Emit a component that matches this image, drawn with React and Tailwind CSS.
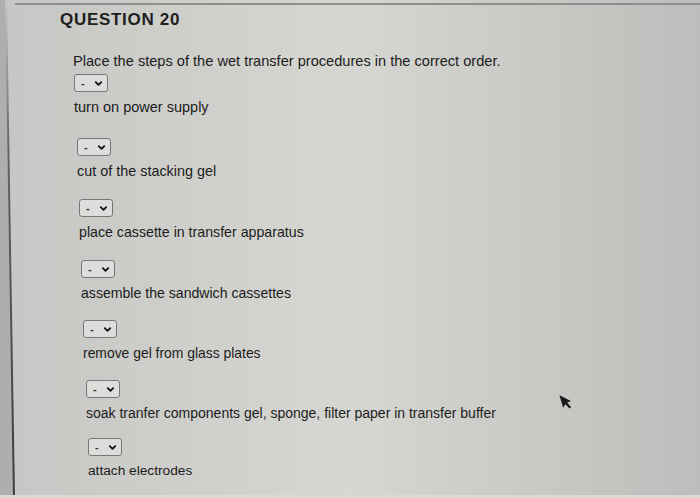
import React from "react";
import { ChevronDown } from "lucide-react";

// each step sits a touch further right, gaps tighten and type shrinks toward the bottom
const steps = [
  { label: "turn on power supply", wrap: "mt-[5px] ml-[14px]", size: "text-[14.5px]" },
  { label: "cut of the stacking gel", wrap: "mt-[23px] ml-[17px]", size: "text-[14.4px]" },
  { label: "place cassette in transfer apparatus", wrap: "mt-[20px] ml-[19px]", size: "text-[14.2px]" },
  { label: "assemble the sandwich cassettes", wrap: "mt-[20px] ml-[21px]", size: "text-[14.1px]" },
  { label: "remove gel from glass plates", wrap: "mt-[19px] ml-[23px]", size: "text-[13.9px]" },
  { label: "soak tranfer components gel, sponge, filter paper in transfer buffer", wrap: "mt-[19px] ml-[26px]", size: "text-[14px]" },
  { label: "attach electrodes", wrap: "mt-[17px] ml-[28px]", size: "text-[13.7px]" },
];

const OrderSelect = () => (
  <div className="flex items-center w-[34px] h-[18px] border border-[#777] rounded-[3px] bg-[#dddddb] pl-[6px]">
    <span className="text-[11px] leading-none text-[#333] font-bold">-</span>
    <ChevronDown size={11} strokeWidth={4} className="ml-[8px] text-[#111]" />
  </div>
);

const Step = ({ label, wrap, size }) => (
  <div className={wrap}>
    <OrderSelect />
    <p className={`mt-[7px] leading-[16px] text-[#1c1c1c] ${size}`}>{label}</p>
  </div>
);

export default function App() {
  return (
    <div
      className="relative w-[700px] h-[498px] overflow-hidden bg-gradient-to-r from-[#c6c6c4] via-[#d6d7d2] to-[#bdbdbb]"
      style={{ fontFamily: '"Liberation Sans", Arial, sans-serif' }}
    >
      {/* monitor bezel edge on the left */}
      <svg className="absolute left-0 top-0" width="20" height="498" viewBox="0 0 20 498">
        <defs>
          <linearGradient id="edgeFade" x1="0" y1="0" x2="0" y2="1">
            <stop offset="0" stopColor="#4a4a4a" stopOpacity="0" />
            <stop offset="0.3" stopColor="#4a4a4a" stopOpacity="0.8" />
            <stop offset="1" stopColor="#3a3a3a" stopOpacity="1" />
          </linearGradient>
        </defs>
        <polygon points="0,0 5,0 13,498 0,498" fill="#a9a9a9" opacity="0.85" />
        <line x1="6" y1="0" x2="14" y2="498" stroke="url(#edgeFade)" strokeWidth="2" />
      </svg>

      <div className="ml-[15px] mt-[3px] h-[2px] bg-[#8e8e8e]" />

      <div className="pl-[60px] pt-[5px]">
        <h2 className="text-[17px] leading-[20px] font-bold tracking-[0.7px] text-[#1e1e1e]">
          QUESTION 20
        </h2>
        <p className="mt-[23px] ml-[13px] text-[14.6px] leading-[16px] text-[#1c1c1c]">
          Place the steps of the wet transfer procedures in the correct order.
        </p>
        {steps.map((s) => (
          <Step key={s.label} label={s.label} wrap={s.wrap} size={s.size} />
        ))}
      </div>

      {/* mouse pointer */}
      <svg className="absolute left-[559px] top-[393px]" width="14" height="18" viewBox="0 0 14 18">
        <path d="M2 1 L3 14 L6 11 L9 16 L11 15 L8 10 L12 9 Z" fill="#1a1a1a" transform="rotate(-12 7 9)" />
      </svg>

      <div className="absolute left-0 right-0 bottom-0 h-[3px] bg-[#d9d9d7]" />
    </div>
  );
}
